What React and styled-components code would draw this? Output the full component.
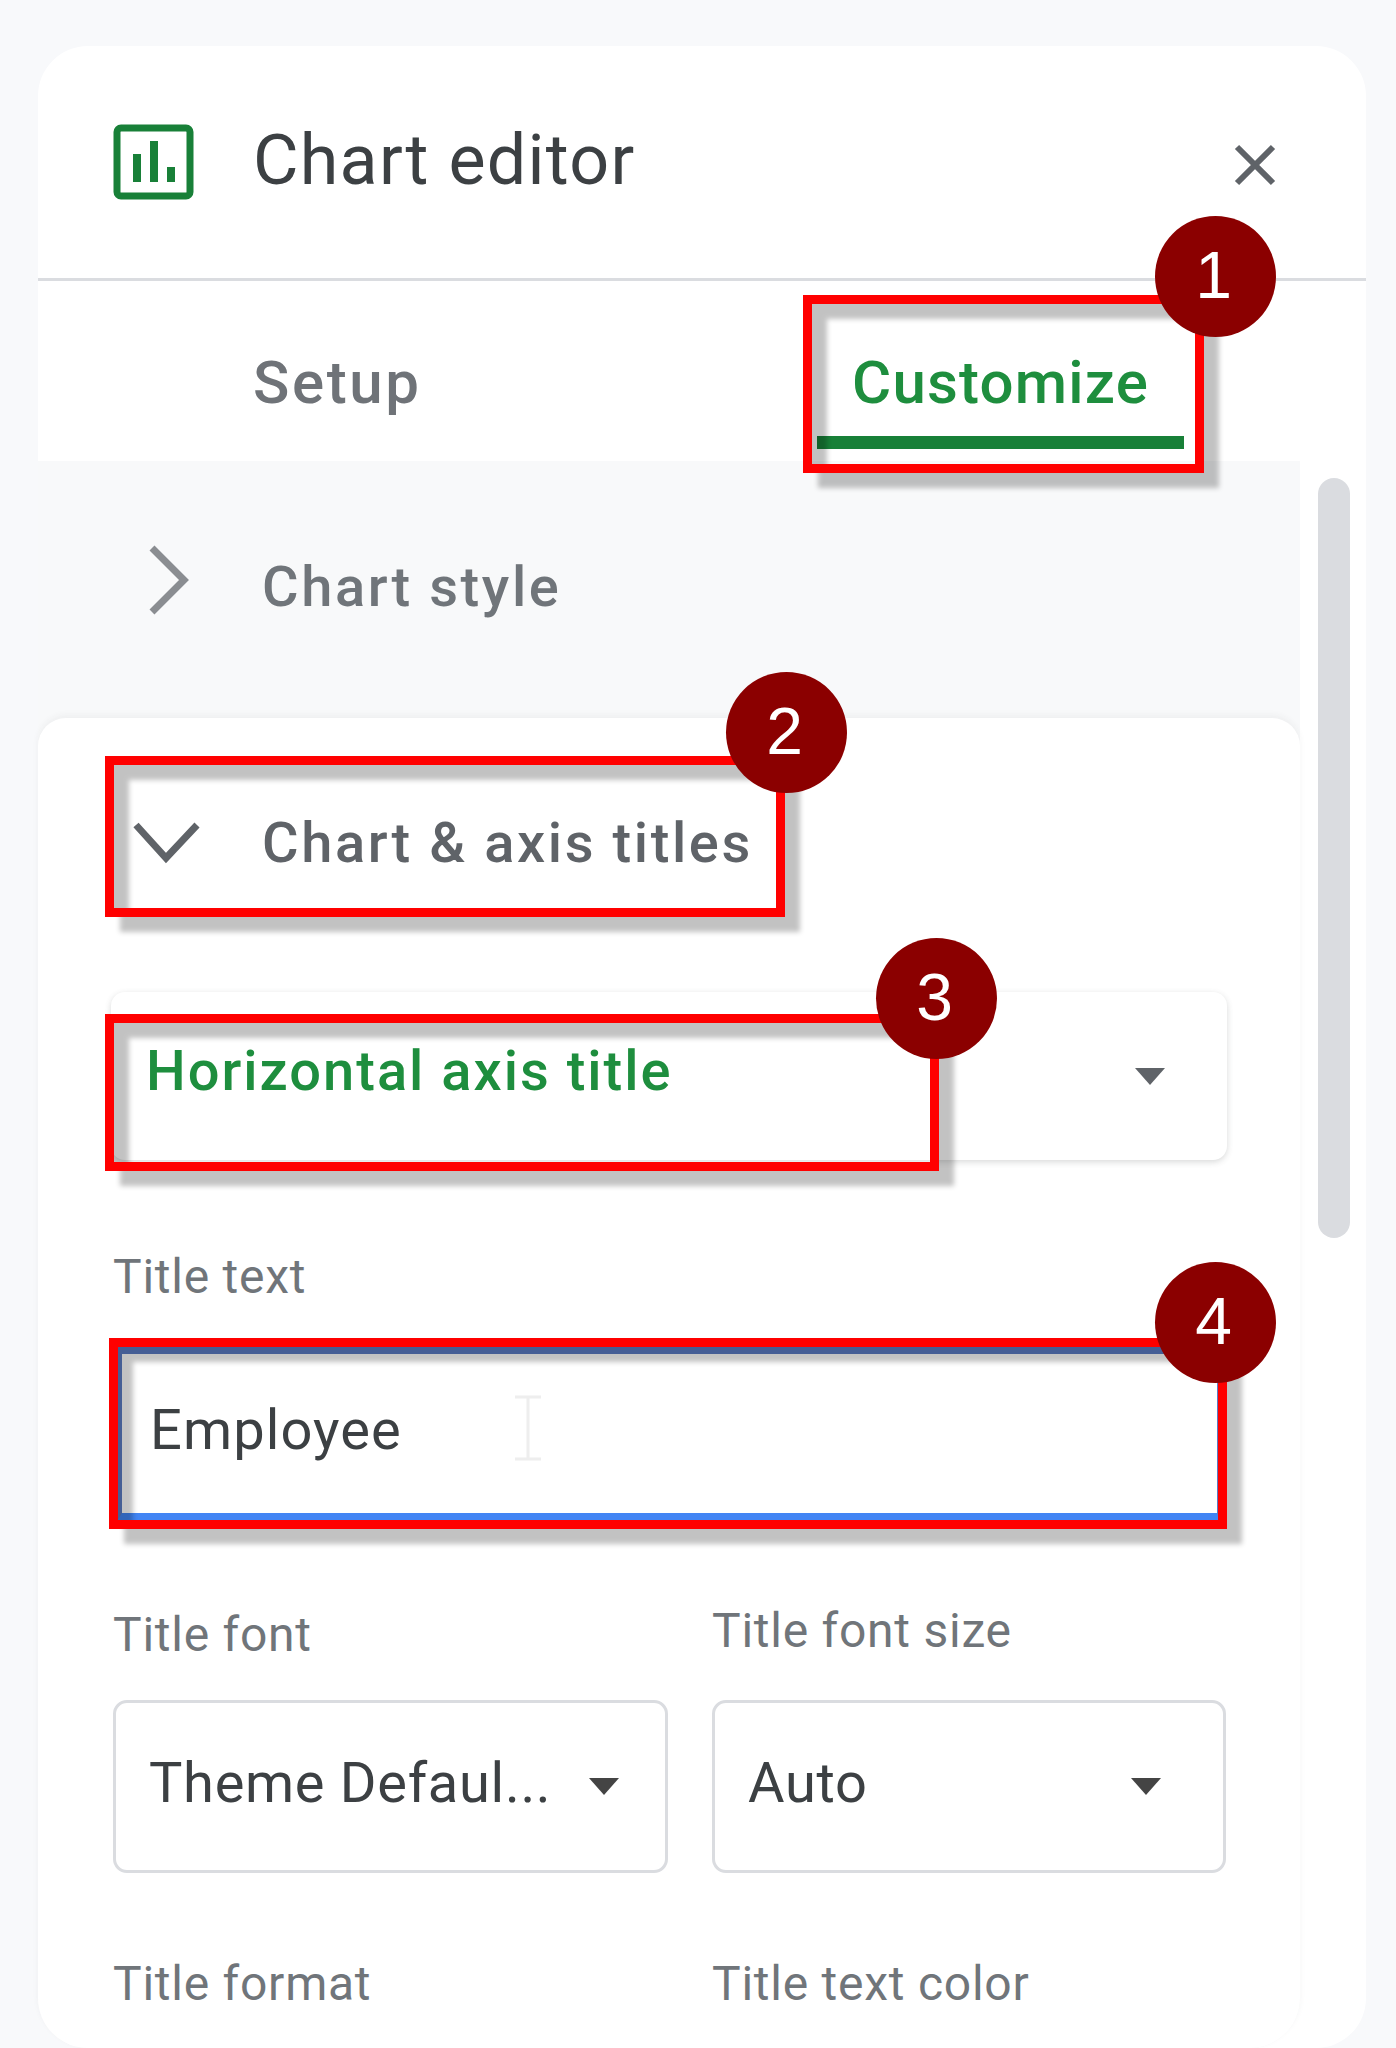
import React from "react";
import styled, { createGlobalStyle } from "styled-components";

const Global = createGlobalStyle`
  html, body { margin: 0; padding: 0; background: #f8f9fb; }
  body { width: 1396px; height: 2048px; overflow: hidden; font-family: Roboto, "Liberation Sans", sans-serif; }
`;

const Page = styled.div`
  width: 1396px;
  height: 2048px;
  padding: 46px 30px 0 38px;
  box-sizing: border-box;
  background: #f8f9fb;
`;
const Panel = styled.div`
  position: relative;
  width: 1328px;
  height: 2002px;
  background: #fff;
  border-radius: 50px;
  overflow: visible;
  display: flex;
  flex-direction: column;
`;
const Header = styled.header`
  height: 232px;
  flex: none;
  display: flex;
  align-items: center;
  padding: 0 90px 0 75px;
  border-bottom: 3px solid #dadce0;
  box-sizing: content-box;
`;
const Logo = styled.svg`
  width: 81px;
  height: 76px;
  margin-top: -1px;
  flex: none;
`;
const Title = styled.h1`
  margin: -4px 0 0 59px;
  flex: 1;
  font: 400 70px/70px Roboto, sans-serif;
  letter-spacing: 1.25px;
  color: #3c4043;
`;
const Close = styled.svg`
  width: 42px;
  height: 43px;
  margin-top: 4px;
  flex: none;
`;
const Tabs = styled.nav`
  height: 180px;
  flex: none;
  display: flex;
  padding-left: 215px;
  box-sizing: border-box;
`;
const Tab = styled.div`
  height: 168px;
  width: ${(p) => p.$width}px;
  display: flex;
  align-items: center;
  justify-content: ${(p) => (p.$active ? "center" : "flex-start")};
  padding-top: 48px;
  box-sizing: border-box;
  font: 500 60px/64px Roboto, sans-serif;
  letter-spacing: ${(p) => (p.$active ? 1.2 : 2.6)}px;
  color: ${(p) => (p.$active ? "#1e8e3e" : "#6f7378")};
  border-bottom: 13px solid ${(p) => (p.$active ? "#188038" : "transparent")};
`;
const Body = styled.div`
  flex: 1;
  display: flex;
  min-height: 0;
`;
const Content = styled.div`
  width: 1262px;
  flex: none;
  background: #f8f9fa;
  display: flex;
  flex-direction: column;
  border-radius: 0 0 50px 50px;
`;
const Section = styled.div`
  height: 257px;
  flex: none;
  display: flex;
  align-items: center;
  padding: 0 0 6px 75px;
  box-sizing: border-box;
`;
const Chevron = styled.svg`
  width: 90px;
  height: 70px;
  flex: none;
  margin-bottom: ${(p) => p.$lift || 0}px;
`;
const SectionTitle = styled.div`
  margin-left: 59px;
  font: 500 56px/64px Roboto, sans-serif;
  letter-spacing: 2.6px;
  color: ${(p) => p.$color};
`;
const Card = styled.div`
  flex: 1;
  background: #fff;
  border-radius: 28px 28px 50px 50px;
  box-shadow: 0 -3px 6px rgba(60, 64, 67, 0.05);
  padding: 0 36px 0 75px;
  box-sizing: border-box;
`;
const CardHeader = styled.div`
  height: 250px;
  display: flex;
  align-items: center;
`;
const TypeSelect = styled.div`
  height: 168px;
  width: 1116px;
  margin: 24px 0 0 -2px;
  padding: 0 62px 0 35px;
  box-sizing: border-box;
  display: flex;
  align-items: center;
  justify-content: space-between;
  border-radius: 14px;
  background: #fff;
  box-shadow: 0 2px 6px rgba(60, 64, 67, 0.2);
  font: 500 56px/64px Roboto, sans-serif;
  letter-spacing: 2px;
  color: #1e8e3e;
`;
const TypeText = styled.span`
  margin-bottom: 10px;
`;
const Caret = styled.svg`
  width: 30px;
  height: 17px;
  flex: none;
`;
const Label = styled.label`
  display: block;
  font: 400 48px/40px Roboto, sans-serif;
  letter-spacing: 0.75px;
  color: #70757a;
  margin-top: ${(p) => p.$top}px;
  margin-bottom: ${(p) => p.$bottom}px;
`;
const TextInput = styled.div`
  position: relative;
  width: 1102px;
  height: 176px;
  margin-left: 4px;
  padding: 0 0 8px 28px;
  box-sizing: border-box;
  display: flex;
  align-items: center;
  border: solid #5b7cc4;
  border-width: 9px 2px 8px 5px;
  border-bottom-color: #4285f4;
  font: 400 56px/64px Roboto, sans-serif;
  letter-spacing: 1.1px;
  color: #3c4043;
`;
const IBeam = styled.svg`
  position: absolute;
  left: 391px;
  top: 41px;
  width: 30px;
  height: 66px;
`;
const TwoColumns = styled.div`
  display: grid;
  grid-template-columns: 555px 514px;
  column-gap: 44px;
  margin-top: ${(p) => p.$top}px;
`;
const Select = styled.div`
  height: 173px;
  border: 3px solid #dadce0;
  border-radius: 14px;
  box-sizing: border-box;
  display: flex;
  align-items: center;
  padding: 0 ${(p) => p.$right}px 0 33px;
  gap: 20px;
  font: 400 56px/64px Roboto, sans-serif;
  letter-spacing: 0.7px;
  color: #3c4043;
`;
const SelectText = styled.span`
  flex: 1;
  white-space: nowrap;
  margin-bottom: 8px;
`;
const RedBox = styled.div`
  position: absolute;
  left: ${(p) => p.$x - 38}px;
  top: ${(p) => p.$y - 46}px;
  width: ${(p) => p.$w}px;
  height: ${(p) => p.$h}px;
  box-sizing: border-box;
  border: 9px solid #ff0000;
  box-shadow: 15px 15px 5px rgba(0, 0, 0, 0.24), inset 15px 15px 5px rgba(0, 0, 0, 0.24);
  pointer-events: none;
`;
const Badge = styled.div`
  position: absolute;
  left: ${(p) => p.$x - 39}px;
  top: ${(p) => p.$y - 46}px;
  width: 121px;
  height: 121px;
  padding: 0 4px 4px 0;
  box-sizing: border-box;
  border-radius: 50%;
  background: #8b0000;
  color: #fff;
  display: flex;
  align-items: center;
  justify-content: center;
  font: 400 66px/1 "Liberation Sans", Arial, sans-serif;
`;
const Scrollbar = styled.div`
  width: 66px;
  flex: none;
  padding: 17px 16px 0 18px;
  box-sizing: border-box;
`;
const Thumb = styled.div`
  width: 32px;
  height: 760px;
  border-radius: 16px;
  background: #dadce0;
`;

const CaretIcon = ({ color = "#5f6368" }) => (
  <Caret viewBox="0 0 30 17" aria-hidden="true">
    <path d="M0 0H30L15 17Z" fill={color} />
  </Caret>
);

export default function App() {
  return (
    <>
      <Global />
      <Page>
        <Panel>
          <Header>
            <Logo viewBox="0 0 81 76" aria-hidden="true">
              <rect x="4" y="4" width="73" height="68" rx="4" fill="#fff" stroke="#188038" strokeWidth="7" />
              <rect x="20" y="30" width="8" height="28" fill="#188038" />
              <rect x="37" y="17" width="8" height="41" fill="#188038" />
              <rect x="54" y="43" width="8" height="15" fill="#188038" />
            </Logo>
            <Title>Chart editor</Title>
            <Close viewBox="0 0 42 43" aria-hidden="true">
              <path d="M3 4L39 40M39 4L3 40" stroke="#5f6368" strokeWidth="6" fill="none" />
            </Close>
          </Header>
          <Tabs>
            <Tab $width={564}>Setup</Tab>
            <Tab $active $width={367}>Customize</Tab>
          </Tabs>
          <Body>
            <Content>
              <Section>
                <Chevron $lift={13} viewBox="0 0 90 70" aria-hidden="true">
                  <path d="M39 3L71 35L39 67" stroke="#8a8d91" strokeWidth="7" fill="none" />
                </Chevron>
                <SectionTitle $color="#70757a">Chart style</SectionTitle>
              </Section>
              <Card>
                <CardHeader>
                  <Chevron viewBox="0 0 90 70" aria-hidden="true">
                    <path d="M23 17L53 50L84 17" stroke="#5f6368" strokeWidth="7" fill="none" />
                  </Chevron>
                  <SectionTitle $color="#5f6368">Chart &amp; axis titles</SectionTitle>
                </CardHeader>
                <TypeSelect>
                  <TypeText>Horizontal axis title</TypeText>
                  <CaretIcon />
                </TypeSelect>
                <Label $top={97} $bottom={48}>Title text</Label>
                <TextInput>
                  Employee
                  <IBeam viewBox="0 0 30 66" aria-hidden="true">
                    <path d="M2 2H28M15 2V64M2 64H28" stroke="#eeeeee" strokeWidth="3" fill="none" />
                  </IBeam>
                </TextInput>
                <TwoColumns $top={90}>
                  <div>
                    <Label $top={4} $bottom={45}>Title font</Label>
                    <Select $right={46}>
                      <SelectText>Theme Defaul...</SelectText>
                      <CaretIcon color="#444" />
                    </Select>
                  </div>
                  <div>
                    <Label $top={0} $bottom={49}>Title font size</Label>
                    <Select $right={62}>
                      <SelectText>Auto</SelectText>
                      <CaretIcon color="#444" />
                    </Select>
                  </div>
                </TwoColumns>
                <TwoColumns $top={91}>
                  <Label $top={0} $bottom={0}>Title format</Label>
                  <Label $top={0} $bottom={0}>Title text color</Label>
                </TwoColumns>
              </Card>
            </Content>
            <Scrollbar>
              <Thumb />
            </Scrollbar>
          </Body>

          <RedBox $x={803} $y={295} $w={401} $h={178} />
          <RedBox $x={105} $y={756} $w={680} $h={161} />
          <RedBox $x={105} $y={1014} $w={834} $h={157} />
          <RedBox $x={109} $y={1338} $w={1118} $h={191} />
          <Badge $x={1156} $y={216}>1</Badge>
          <Badge $x={727} $y={672}>2</Badge>
          <Badge $x={877} $y={938}>3</Badge>
          <Badge $x={1156} $y={1262}>4</Badge>
        </Panel>
      </Page>
    </>
  );
}
